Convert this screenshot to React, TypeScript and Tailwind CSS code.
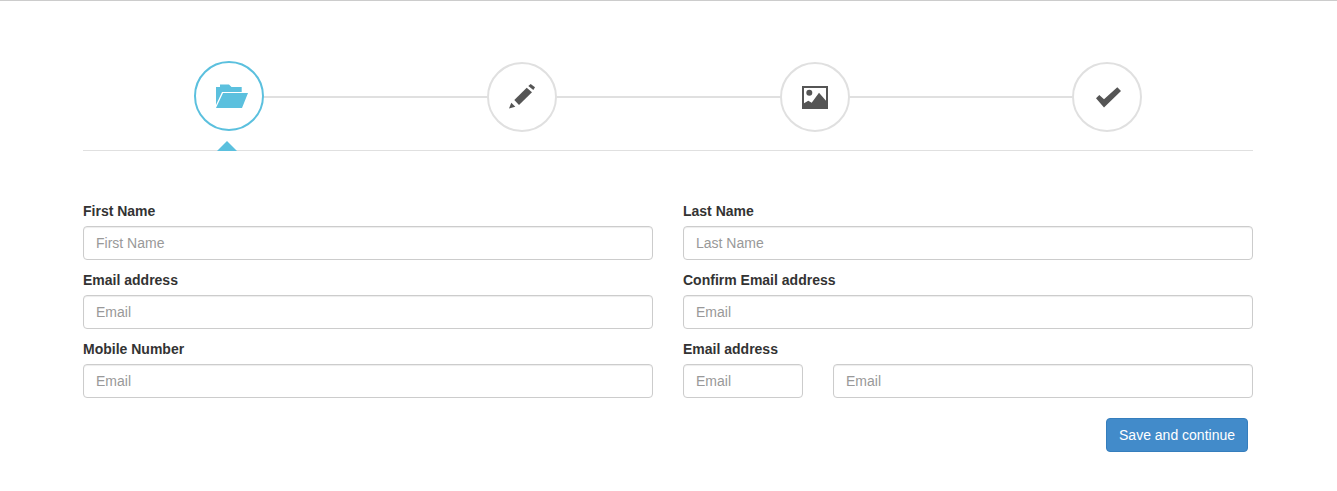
import React from "react";

const FolderIcon = () => (
  <svg width="32" height="24" viewBox="0 0 32 24" className="block ml-[6px]" fill="#5bc0de">
    <path d="M0 3H4V.5H13L15.5 3H25.7V8H6L0 21z" />
    <path d="M7 9H32L26 24H0z" />
  </svg>
);
const PencilIcon = () => (
  <svg width="26" height="26" viewBox="0 0 26 26" className="block" fill="#555">
    <path d="M0 24.6L2.3 18.7 6.3 22.7z" />
    <path d="M5.3 16L17.7 3.7 23 8.3 10 21z" />
    <path d="M19.3 2L21.7 0 26 3.3 24.3 6z" />
  </svg>
);
const ImageIcon = () => (
  <svg width="26" height="24" viewBox="0 0 26 24" className="block mt-[1px]" fill="#555">
    <path fillRule="evenodd" d="M0 0H26V23H0zM2 2V17.3L6.3 14.7 9.7 16.7 17 6.7 24 14.7V2z" />
    <circle cx="7.3" cy="6.7" r="3" />
  </svg>
);
const CheckIcon = () => (
  <svg width="26" height="22" viewBox="0 0 26 22" className="block ml-[4px] mt-[2px]" fill="#555">
    <path d="M0 11.3L3.3 8 8 12.3 21.3.3 25 4 8 20.5z" />
  </svg>
);

const steps = [
  { icon: <FolderIcon />, active: true },
  { icon: <PencilIcon /> },
  { icon: <ImageIcon /> },
  { icon: <CheckIcon /> },
];

const inputClass =
  "block w-full h-[34px] px-3 text-[14px] bg-white border border-[#ccc] rounded shadow-[inset_0_1px_1px_rgba(0,0,0,0.075)] text-[#555] outline-none placeholder:text-[#999]";

const labelClass = "block mb-[5px] text-[14px] leading-5 font-bold text-[#333]";

const Field = ({ label, placeholder }: { label: string; placeholder: string }) => (
  <div className="mb-[10px]">
    <label className={labelClass}>{label}</label>
    <input placeholder={placeholder} className={inputClass} />
  </div>
);

export default function App() {
  return (
    <div className="min-h-[491px] bg-white border-t border-[#ccc] font-['Liberation_Sans',Arial,sans-serif] text-[14px] text-[#333]">
      <div className="mx-[83px] w-[1170px]">
        <div className="relative mt-[61px] h-[88px] border-b border-[#e0e0e0] box-content">
          <div className="absolute left-[146px] right-[146px] top-[34px] h-[2px] bg-[#e0e0e0]" />
          <div className="relative grid grid-cols-[293px_293px_292px_70px] pl-[111px]">
            {steps.map((s, i) => (
              <div
                key={i}
                className={
                  s.active
                    ? "-mt-px flex items-center justify-center w-[70px] h-[70px] rounded-full bg-white border-2 border-[#5bc0de]"
                    : "flex items-center justify-center w-[70px] h-[70px] rounded-full bg-white border-2 border-[#e0e0e0]"
                }
              >
                {s.icon}
              </div>
            ))}
          </div>
          <div className="absolute left-[134px] bottom-[-1px] w-0 h-0 border-x-[10px] border-x-transparent border-b-[10px] border-b-[#5bc0de]" />
        </div>

        <form className="mt-[50px]">
          <div className="grid grid-cols-2 gap-x-[30px]">
            <Field label="First Name" placeholder="First Name" />
            <Field label="Last Name" placeholder="Last Name" />
            <Field label="Email address" placeholder="Email" />
            <Field label="Confirm Email address" placeholder="Email" />
            <Field label="Mobile Number" placeholder="Email" />
            <div className="mb-[10px]">
              <label className={labelClass}>Email address</label>
              <div className="flex gap-[30px]">
                <input placeholder="Email" className={inputClass + " !w-[120px] shrink-0"} />
                <input placeholder="Email" className={inputClass} />
              </div>
            </div>
          </div>
          <div className="flex justify-end mt-[10px] pr-[5px]">
            <button
              type="button"
              className="h-[34px] px-3 text-[14px] text-white bg-[#428bca] border border-[#357ebd] rounded"
            >
              Save and continue
            </button>
          </div>
        </form>
      </div>
    </div>
  );
}
